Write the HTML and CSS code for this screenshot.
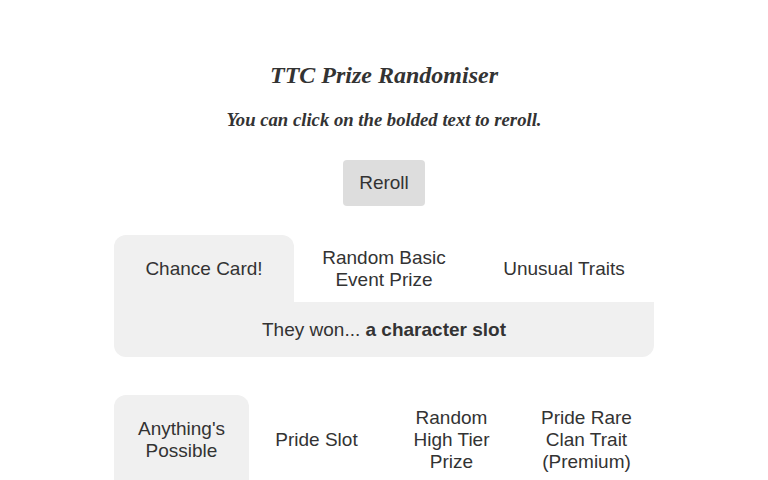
FILE: index.html
```html
<!DOCTYPE html>
<html lang="en">
<head>
    <meta charset="UTF-8">
    <meta name="viewport" content="width=device-width, initial-scale=1.0">
    <title>TTC Prize Randomiser</title>
    <link rel="stylesheet" href="styles.css">
</head>
<body>
    <div class="container">
        <h1>TTC Prize Randomiser</h1>
        <p class="hint">You can click on the bolded text to reroll.</p>
        <div class="actions">
            <button class="reroll">Reroll</button>
        </div>

        <div class="tabset">
            <div class="tabs">
                <div class="tab active">Chance Card!</div>
                <div class="tab">Random Basic Event Prize</div>
                <div class="tab">Unusual Traits</div>
            </div>
            <div class="panel">They won... <b>a character slot</b></div>
        </div>

        <div class="tabset">
            <div class="tabs">
                <div class="tab active">Anything's Possible</div>
                <div class="tab">Pride Slot</div>
                <div class="tab">Random High Tier Prize</div>
                <div class="tab">Pride Rare Clan Trait (Premium)</div>
            </div>
            <div class="panel">They won... <b>a pride slot</b></div>
        </div>
    </div>
</body>
</html>
```

FILE: styles.css
```css
body {
    margin: 0;
    padding: 0;
    background: #ffffff;
    color: #333333;
    font-family: 'Liberation Sans', Arial, sans-serif;
}
.container {
    width: 540px;
    margin: 0 auto;
    padding-top: 60px;
}
h1 {
    margin: 0;
    font-family: 'Liberation Serif', 'Times New Roman', serif;
    font-style: italic;
    font-size: 24px;
    line-height: 30px;
    text-align: center;
}
.hint {
    margin: 18px 0 0;
    font-family: 'Liberation Serif', 'Times New Roman', serif;
    font-style: italic;
    font-weight: bold;
    font-size: 18.7px;
    line-height: 24px;
    text-align: center;
}
.actions {
    display: flex;
    justify-content: center;
    margin-top: 28px;
}
.reroll {
    border: none;
    border-radius: 4px;
    background: #dddddd;
    color: #333333;
    font-family: inherit;
    font-size: 19px;
    line-height: 22px;
    padding: 12px 16px;
    cursor: pointer;
}
.tabset {
    margin-top: 29px;
}
.tabset + .tabset {
    margin-top: 38px;
}
.tabs {
    display: flex;
}
.tab {
    flex: 1;
    display: flex;
    align-items: center;
    justify-content: center;
    text-align: center;
    padding: 11.5px 16px;
    font-size: 19px;
    line-height: 22px;
    border-radius: 12px 12px 0 0;
    cursor: pointer;
}
.tab.active {
    background: #f0f0f0;
}
.panel {
    background: #f0f0f0;
    border-radius: 0 0 12px 12px;
    padding: 16.5px 16px;
    text-align: center;
    font-size: 19px;
    line-height: 22px;
}
```
